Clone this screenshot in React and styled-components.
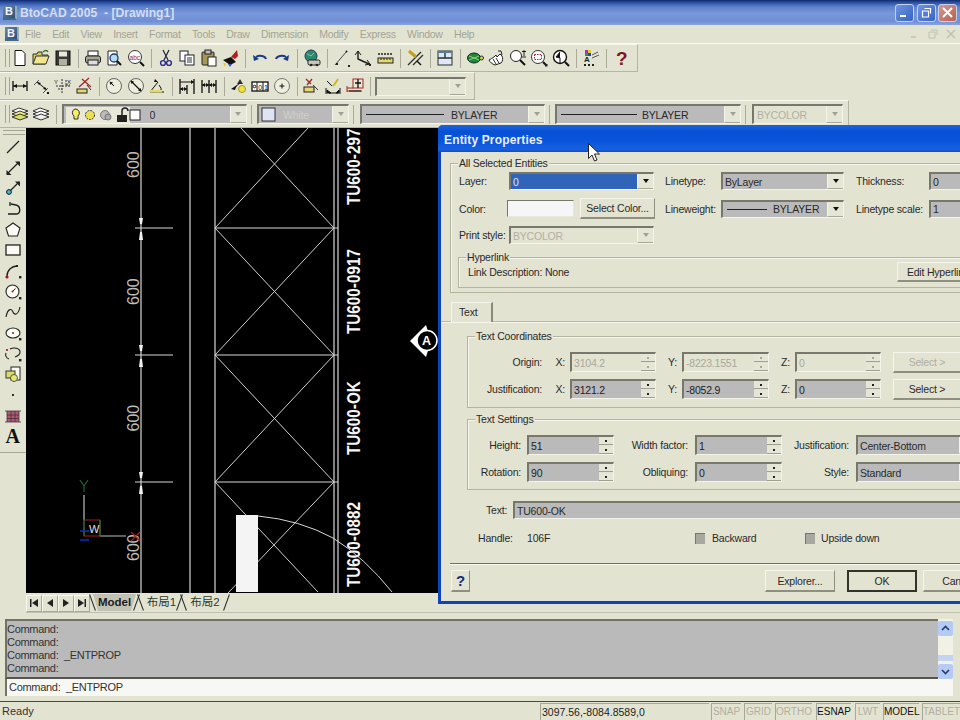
import React from "react";
import styled, { createGlobalStyle, css } from "styled-components";

const Global = createGlobalStyle`
  html, body { margin: 0; padding: 0; background: #e3e3d2; overflow: hidden; }
  #root { width: 960px; height: 720px; }
  * { box-sizing: border-box; }
`;

const CHROME = "#e3e3d2";
const FIELD = "#bababa";
const UI_TEXT = css`font-size: 10.5px; letter-spacing: -0.2px;`;

const Page = styled.div`
  position: relative; width: 960px; height: 720px; overflow: hidden;
  display: flex; flex-direction: column; background: ${CHROME};
  font-family: "Liberation Sans", Arial, sans-serif; font-size: 11px; color: #2a2a2a;
`;
const TitleBar = styled.div`
  height: 25px; display: flex; align-items: center; padding: 0 3px 0 3px; flex: none;
  background: linear-gradient(180deg, #10296a 0, #2b4fa3 10%, #5f82cc 28%, #7a98da 55%, #6f8ed6 85%, #8aa4df 100%);
`;
const AppLogo = styled.div`
  width: ${p => p.$s}px; height: ${p => p.$s}px; flex: none; display: flex; align-items: center; justify-content: center;
  background: linear-gradient(135deg, #6b85a8, #2f4f78); color: #f2f5fa; font-weight: 700; font-size: ${p => p.$s - 3}px;
  line-height: 1; border-right: 2px solid #8fb0b8; border-bottom: 2px solid #3f6a80;
`;
const TitleText = styled.div`
  margin-left: 3px; font-size: 12.2px; font-weight: 700; color: #d3def3; white-space: pre;
`;
const WinButtons = styled.div`margin-left: auto; display: flex; gap: 2.5px; margin-right: 0;`;
const WinButton = styled.div`
  width: 19px; height: 18px; border-radius: 3px; border: 1px solid #c4d2ee;
  display: flex; align-items: center; justify-content: center;
  background: ${p => p.$close ? "linear-gradient(135deg,#d39a8e,#b8604e)" : "linear-gradient(135deg,#6f96e0,#3663c4)"};
  svg { display: block; }
`;
const MenuBar = styled.div`
  height: 19px; display: flex; align-items: center; flex: none; padding-left: 5px;
  border-bottom: 1px solid #fbfbf4; position: relative;
`;
const MenuItems = styled.div`display: flex; gap: 11.4px; margin-left: 6px; color: #a3a395; font-size: 10.5px; letter-spacing: -0.3px;`;
const MdiButtons = styled.div`
  margin-left: auto; margin-right: 3px; display: flex; gap: 6px; color: #c2c2b4;
  svg { display: block; }
`;
const Dock = styled.div`display: flex; flex-direction: column; flex: none;`;
const Toolbar = styled.div`
  width: ${p => p.$w}px; height: ${p => p.$h}px; display: flex; align-items: center; padding-left: 9px;
  border-right: 1px solid #b5b5a4; border-bottom: 1px solid #b5b5a4; border-top: 1px solid #f8f8ef; position: relative;
  &::before {
    content: ""; position: absolute; left: 5px; top: 4px; bottom: 4px; width: 3px;
    border-left: 1px solid #a5a594; border-right: 1px solid #a5a594;
  }
`;
const ToolBtn = styled.div`
  width: 21.5px; height: 21px; flex: none; display: flex; align-items: center; justify-content: center;
  svg { display: block; }
`;
const Sep = styled.div`
  width: 8.5px; height: 21px; flex: none; position: relative;
  &::after { content: ""; position: absolute; left: 4px; top: 1px; bottom: 1px; width: 1px; background: #aaa99a; }
`;
const Field = styled.div`
  width: ${p => p.$w ? p.$w + "px" : "auto"}; height: ${p => p.$h || 20}px; flex: ${p => p.$w ? "none" : 1};
  margin-left: ${p => p.$ml || 0}px;
  display: flex; align-items: center; overflow: hidden; white-space: nowrap;
  background: ${p => p.$bg || FIELD}; color: ${p => p.$c || "#2a2a2a"};
  border-top: 2px solid #77776c; border-left: 2px solid #77776c;
  border-right: 1px solid #f4f4ea; border-bottom: 1px solid #f4f4ea;
  ${UI_TEXT} padding-left: 2px;
`;
const FieldText = styled.span`flex: 1; min-width: 0; overflow: hidden; padding-left: ${p => p.$pl || 0}px;`;
const DropBtn = styled.div`
  width: 16px; align-self: stretch; flex: none; background: #e6e6d6; border-left: 1px solid #f4f4ec; border-bottom: 1px solid #a8a898;
  display: flex; align-items: center; justify-content: center;
  &::after {
    content: ""; width: 0; height: 0; border-left: 3.5px solid transparent; border-right: 3.5px solid transparent;
    border-top: 4px solid ${p => p.$off ? "#a0a094" : "#111"};
  }
`;
const LineSample = styled.span`
  width: ${p => p.$w}px; height: 1px; background: #222; flex: none; margin: 0 ${p => p.$gap}px 0 2px;
`;
const Canvasish = styled.div`display: flex; flex: 1; min-height: 0;`;
const LeftBar = styled.div`
  width: 26px; flex: none; height: 325px; display: flex; flex-direction: column; align-items: center; padding-top: 8.5px;
  border-bottom: 1px solid #a8a898; position: relative;
  &::before {
    content: ""; position: absolute; top: 2px; left: 3px; right: 1px; height: 3px;
    border-top: 1px solid #a5a594; border-bottom: 1px solid #a5a594;
  }
`;
const LeftBtn = styled.div`
  height: 20.7px; width: 22px; flex: none; display: flex; align-items: center; justify-content: center;
  svg { display: block; }
`;
const Work = styled.div`flex: 1; display: flex; flex-direction: column; min-width: 0;`;
const Drawing = styled.svg`
  display: block; width: 934px; height: 465px; flex: none; background: #000;
`;
const LayoutBar = styled.div`
  height: 19px; margin-top: 1px; display: flex; align-items: center; flex: none; border-bottom: 1px solid #c0c0b0;
`;
const NavBtn = styled.div`
  width: 16px; height: 17px; flex: none; display: flex; align-items: center; justify-content: center;
  border-right: 1px solid #a8a898; border-bottom: 1px solid #a8a898; border-top: 1px solid #f8f8ef; border-left: 1px solid #f8f8ef;
  svg { display: block; }
`;
const LayoutTab = styled.div`
  position: relative; width: ${p => p.$w}px; height: 17px; margin-top: -1px; flex: none; text-align: center; line-height: 17px;
  font-size: 11.5px; font-family: "Liberation Sans", "Noto Sans CJK SC", sans-serif;
  color: ${p => p.$on ? "#1c1c1c" : "#2c3a2c"}; font-weight: ${p => p.$on ? 700 : 400};
  ${p => p.$on && css`
    background: #c2c2b4; clip-path: polygon(0 0, 100% 0, calc(100% - 5px) 100%, 5px 100%);
  `}
`;
const Slant = styled.div`
  width: 1px; height: 17px; flex: none; background: #2a2a2a; margin-top: -1px; margin-left: ${p => p.$ml || 0}px;
  transform: rotate(${p => p.$r}deg);
`;
const CommandArea = styled.div`
  flex: none; height: 80px; margin: 8px 7px 0 5px; display: flex; flex-direction: column;
`;
const CommandTop = styled.div`display: flex; height: 60px; flex: none;`;
const History = styled.div`
  flex: 1; background: #bababa; border-top: 2px solid #73736a; border-left: 2px solid #73736a; border-bottom: 2px solid #55554d;
  padding-top: 2px; font-size: 11px; letter-spacing: -0.3px; line-height: 13px; color: #333;
  div { white-space: pre; }
`;
const Scroll = styled.div`
  width: 15px; flex: none; background: #f1f1e6; display: flex; flex-direction: column; justify-content: space-between;
  padding-top: 2px; position: relative;
`;
const ScrollBtn = styled.div`
  height: 15px; background: #b4cbf3; border-radius: 2px; display: flex; align-items: center; justify-content: center;
  svg { display: block; }
`;
const ScrollThumb = styled.div`
  position: absolute; left: 0; right: 0; bottom: 18px; height: 6px; background: #c4d4f0;
`;
const CommandInput = styled.div`
  height: 17px; background: #f7f7f4; font-size: 11px; letter-spacing: -0.3px; line-height: 17px; white-space: pre; padding-left: 2px;
  border-left: 2px solid #73736a; color: #333;
`;
const StatusBar = styled.div`
  flex: none; height: 19px; margin-top: 2px; border-top: 1px solid #4a4a42; display: flex; align-items: center;
  font-size: 11px; position: relative;
`;
const StatusReady = styled.div`padding-left: 2px; width: 541px; color: #333;`;
const Coord = styled.div`
  width: 169px; height: 17px; line-height: 16px; border-left: 1px solid #a8a898; border-top: 1px solid #a8a898; padding-left: 1px;
  font-size: 10.5px; color: #222; flex: none;
`;
const StatusBtn = styled.div`
  width: ${p => p.$w}px; margin-left: ${p => p.$ml}px; height: 17px; line-height: 16px; text-align: center; flex: none; font-size: 10px;
  color: ${p => p.$on ? "#111" : "#b0b0a2"};
  border-left: 1px solid #a8a898; border-top: 1px solid #a8a898;
`;

/* Dialog */
const Dialog = styled.div`
  position: absolute; left: 438px; top: 125px; width: 545px; height: 479px;
  border: 3px solid #0f44b8; border-top: 0; border-radius: 5px 0 0 0; background: ${CHROME}; display: flex; flex-direction: column;
`;
const DlgTitle = styled.div`
  height: 27px; flex: none; margin: 0 -3px; padding-left: 6px; display: flex; align-items: center; padding-top: 2px;
  background: linear-gradient(180deg, #1c64de 0, #0650d4 25%, #0a55dc 60%, #1860e0 90%, #0d4cc4 100%);
  color: #e8effc; font-weight: 700; font-size: 12px; letter-spacing: 0.15px; border-radius: 5px 0 0 0;
`;
const Group = styled.div`
  position: relative; border: 1px solid #b4b4a4; flex: none;
  margin: ${p => p.$mt}px ${p => p.$mr || 0}px 0 ${p => p.$ml}px;
  padding: ${p => p.$pt}px 0 ${p => p.$pb}px ${p => p.$pl || 0}px;
  box-shadow: inset 1px 1px 0 #f5f5ec;
`;
const Legend = styled.div`
  position: absolute; top: -7px; left: 7px; background: ${CHROME}; padding: 0 1px; ${UI_TEXT} line-height: 13px; color: #2a2a2a;
`;
const Row = styled.div`
  display: flex; align-items: center; height: ${p => p.$h}px; margin-top: ${p => p.$mt || 0}px; margin-left: ${p => p.$ml || 0}px;
`;
const Lbl = styled.div`
  width: ${p => p.$w}px; margin-left: ${p => p.$ml || 0}px; flex: none; white-space: nowrap; ${UI_TEXT}
  text-align: ${p => p.$right ? "right" : "left"}; padding-right: ${p => p.$pr || 0}px;
  color: ${p => p.$c || "#2a2a2a"};
`;
const Btn = styled.div`
  width: ${p => p.$w}px; height: ${p => p.$h || 21}px; margin-left: ${p => p.$ml || 0}px; flex: none;
  display: flex; align-items: center; justify-content: center; white-space: nowrap; ${UI_TEXT}
  color: ${p => p.$off ? "#aeaea0" : "#2a2a2a"};
  border-right: 1px solid #8f8f80; border-bottom: 2px solid #8f8f80; border-top: 1px solid #f5f5ec; border-left: 1px solid #f5f5ec;
  ${p => p.$default && css`border: 2px solid #33332c; border-right-width: 2px;`}
`;
const Swatch = styled.div`
  width: 67px; height: 17px; flex: none; background: #f6f6f8; border: 1px solid #77776c; border-bottom-color: #e8e8dc; border-right-color: #e8e8dc;
`;
const SpinWrap = styled.div`
  width: 14px; align-self: stretch; flex: none; display: flex; flex-direction: column; gap: 1px; background: ${CHROME};
`;
const SpinPart = styled.div`
  flex: 1; background: #e6e6d6; border-bottom: 1px solid #a0a090; display: flex; align-items: center; justify-content: center;
  &::after {
    content: ""; width: 2px; height: 2px; background: ${p => p.$off ? "#a8a89a" : "#222"};
  }
`;
const TabStrip = styled.div`
  height: 20px; margin-top: 9px; flex: none; border-bottom: 1px solid #b8b8a8; padding-left: 10px; box-shadow: 0 1px 0 #f5f5ec;
`;
const TabHead = styled.div`
  width: 42px; height: 20px; padding: 2px 0 0 7px; border-right: 2px solid #8a8a7a; ${UI_TEXT} line-height: 14px;
  background: ${CHROME}; border-top: 1px solid #f5f5ec; border-left: 1px solid #f5f5ec;
`;
const Check = styled.div`
  width: 10px; height: 11px; flex: none; margin-left: ${p => p.$ml}px; background: #a8a8a0; border-left: 1px solid #77776c; border-top: 1px solid #77776c;
`;
const DlgRule = styled.div`
  height: 2px; margin-top: 16px; margin-left: 9px; background: #6f6f64; border-bottom: 1px solid #fafaf0; flex: none;
`;
const DlgFooter = styled.div`display: flex; align-items: center; height: 22px; margin-top: 5px; padding-left: 10px; flex: none;`;
const HelpText = styled.span`color: #0d2f80; font-weight: 700; font-size: 15px;`;

const S = { fill: "none", stroke: "#1c1c1c", strokeWidth: 1 };

const I = {
  new: <path d="M5 2.5h7l3 3v12H5z" fill="#fff" stroke="#111" />,
  open: <><path d="M2 6h4l1-2h4v3h6l-3 9H2z" fill="#d8c860" stroke="#333"/><path d="M2 16l3-8h13l-3 8z" fill="#f0e58c" stroke="#333"/><path d="M12 4c2-2 4-2 5 0" stroke="#2a7a2a" fill="none" strokeWidth="1.4"/></>,
  save: <><rect x="3" y="3" width="14" height="14" fill="#3a3a34" stroke="#111"/><rect x="6" y="3.5" width="8" height="5" fill="#e8e8dc"/><rect x="6" y="11" width="8" height="6" fill="#b0b0a0"/></>,
  print: <><rect x="5" y="3" width="10" height="5" fill="#fff" stroke="#222"/><rect x="2.5" y="8" width="15" height="7" rx="2" fill="#a8a898" stroke="#222"/><rect x="5" y="12" width="10" height="5" fill="#ddd" stroke="#222"/></>,
  preview: <><path d="M4 3h9v14H4z" fill="#fff" stroke="#222"/><circle cx="10" cy="10" r="4" fill="#b8dcec" stroke="#1a3a7a" strokeWidth="1.3"/><path d="M13 13l4 4" stroke="#111" strokeWidth="2"/></>,
  spell: <><circle cx="9" cy="9" r="6.5" fill="#fff" stroke="#333"/><text x="3.6" y="11.5" fontSize="6.5" fill="#a02020" fontFamily="Liberation Sans">abc</text><path d="M14 14l4 4" stroke="#111" strokeWidth="2"/></>,
  cut: <><path d="M7 2l5 10M13 2L8 12" stroke="#223" strokeWidth="1.2"/><circle cx="7" cy="15" r="2.4" fill="none" stroke="#2a2a90" strokeWidth="1.4"/><circle cx="13" cy="15" r="2.4" fill="none" stroke="#2a2a90" strokeWidth="1.4"/></>,
  copy: <><rect x="3" y="3" width="8" height="10" fill="#fff" stroke="#223"/><rect x="8" y="7" width="9" height="10" fill="#fff" stroke="#223"/><path d="M10 10h5M10 12h5M10 14h5" stroke="#334"/></>,
  paste: <><rect x="3" y="4" width="12" height="13" rx="1" fill="#a89858" stroke="#222"/><rect x="6" y="2" width="6" height="4" fill="#bbb" stroke="#222"/><rect x="9" y="9" width="8" height="9" fill="#fff" stroke="#222"/></>,
  match: <><path d="M3 12l8-3 5 5-6 3z" fill="#111"/><path d="M11 9l6-7 1 6-3 3z" fill="#b02020"/><path d="M3 14l3 2-1 3z" fill="#e8c820"/><path d="M8 16l2 3 2-3z" fill="#2a50c0"/></>,
  undo: <><path d="M6 9a6 4 0 0 1 10 2" {...S} stroke="#1a3a8a" strokeWidth="2"/><path d="M3 7l1 6 5-2z" fill="#1a3a8a"/></>,
  redo: <><path d="M14 9a6 4 0 0 0-10 2" {...S} stroke="#1a3a8a" strokeWidth="2"/><path d="M17 7l-1 6-5-2z" fill="#1a3a8a"/></>,
  tree: <><circle cx="9" cy="8" r="6" fill="#2a8a70" stroke="#1a3a50"/><path d="M5 6l4 2 3-3" stroke="#8cc0a0" fill="none"/><rect x="6" y="12" width="12" height="5" rx="1.5" fill="#c8c8b8" stroke="#222"/><circle cx="9" cy="17" r="1.3" fill="#222"/><circle cx="15" cy="17" r="1.3" fill="#222"/></>,
  snapLine: <><path d="M3 17L15 3" stroke="#444"/><path d="M14 4l1-1" stroke="#222" strokeWidth="2"/><rect x="4" y="15" width="2" height="2" fill="#222"/><rect x="16" y="17" width="2" height="2" fill="#222"/></>,
  ucs: <><path d="M5 3v8l11 5" {...S} strokeWidth="1.4"/><path d="M2 7l3-4 3 4M14 12l3 4-5 1" {...S}/><rect x="16" y="16" width="2" height="2" fill="#222"/></>,
  ruler: <><path d="M3 6h14" stroke="#222" strokeWidth="1.4" strokeDasharray="2 1"/><rect x="3" y="10" width="15" height="5" fill="#e6d870" stroke="#222"/><path d="M6 10v2M9 10v2M12 10v2M15 10v2" stroke="#222"/></>,
  layer: <><path d="M3 17L16 4M8 17L18 7" stroke="#333" strokeWidth="1.4"/><path d="M4 3l7 6" stroke="#c0a020" strokeWidth="3"/><path d="M12 13l4 4" stroke="#111" strokeWidth="1.5"/></>,
  windows: <><rect x="3" y="3" width="14" height="14" fill="#dfe8f4" stroke="#233"/><path d="M3 10h14M10 3v7" stroke="#233" strokeWidth="1.4"/><rect x="3" y="3" width="14" height="2" fill="#5a7a9a"/></>,
  orbit: <><ellipse cx="9" cy="10" rx="6.5" ry="5" fill="#208a30" stroke="#123"/><path d="M4 8l10 4M4 12l10-4" stroke="#8cd08c"/><circle cx="16.5" cy="10" r="2" fill="#e0d040" stroke="#333"/></>,
  pan: <><path d="M3 12c2-1 3-2 5-3l2-2 1 2 3-3 2 2c1 2 1 5-1 7l-6 2c-3-1-5-3-6-5z" fill="#fff" stroke="#222"/><path d="M12 3l3 0 1 4" stroke="#222" fill="none"/><path d="M7 11l3 5M10 10l3 5" stroke="#333"/></>,
  zoomR: <><circle cx="8" cy="8" r="5.5" fill="#fff" stroke="#222"/><path d="M12 12l5 5" stroke="#111" strokeWidth="2"/><path d="M16 2v6M14 3.5h4M14 9h4" stroke="#222"/></>,
  zoomW: <><circle cx="9" cy="9" r="6.5" fill="#fff" stroke="#333"/><rect x="5.5" y="6.5" width="7" height="5" fill="none" stroke="#b02020" strokeDasharray="1.5 1"/><path d="M14 14l3 3" stroke="#111" strokeWidth="2"/><rect x="16" y="16" width="2.5" height="2.5" fill="#222"/></>,
  zoomP: <><circle cx="9" cy="9" r="6.5" fill="#fff" stroke="#111" strokeWidth="1.4"/><path d="M9 4l-4 5 4 1v5" fill="#111" stroke="#111"/><path d="M14 14l4 4" stroke="#111" strokeWidth="2"/></>,
  props: <><rect x="4" y="2" width="3" height="3" fill="#c020c0"/><rect x="7" y="2" width="3" height="3" fill="#e0d020"/><rect x="4" y="5" width="3" height="3" fill="#20a030"/><rect x="7" y="5" width="3" height="3" fill="#2040c0"/><text x="3" y="14" fontSize="8" fontWeight="700" fill="#222" fontFamily="Liberation Sans">A</text><path d="M3 16h2v2H3zM7 16h2v2H7zM11 16h2v2h-2z" fill="#222"/><path d="M11 7l6-3M11 10l7-3" stroke="#555"/></>,
  help: <text x="5" y="17" fontSize="19" fontWeight="700" fill="#801818" fontFamily="Liberation Sans">?</text>,
  dimL: <><path d="M3 5v10M17 5v10" stroke="#111" strokeWidth="1.3"/><path d="M3 10h14" stroke="#111"/><path d="M3 10l4-2v4zM17 10l-4-2v4z" fill="#111"/></>,
  dimA: <><path d="M3 9l5-5M12 17l5-5" stroke="#555"/><path d="M6 6l10 8" stroke="#111"/><path d="M6 6l4 1-2 2zM16 14l-4-1 2-2z" fill="#111"/><rect x="16" y="16" width="2" height="2" fill="#111"/></>,
  dimO: <><path d="M9 3v14M3 10h14M13 4v5M13 9h4M5 13h4" stroke="#333" strokeDasharray="2 1"/><text x="1" y="8" fontSize="6" fill="#222" fontFamily="Liberation Sans">Y</text><text x="14" y="8" fontSize="6" fill="#222" fontFamily="Liberation Sans">X</text></>,
  dimE: <><rect x="3" y="13" width="10" height="4" fill="#e6d870" stroke="#222"/><path d="M5 11l10-9M8 3l9 8" stroke="#a02828" strokeWidth="1.3"/><path d="M13 9l4 5" stroke="#333"/></>,
  dimR: <><circle cx="10" cy="10" r="7.5" fill="#eeeede" stroke="#666"/><path d="M10 10L6 6" stroke="#111"/><path d="M5.5 5.5l1 3.5 2.5-2.5z" fill="#111"/></>,
  dimD: <><circle cx="10" cy="10" r="7.5" fill="#eeeede" stroke="#666"/><path d="M5 5l10 10" stroke="#111" strokeWidth="1.2"/><path d="M4.5 4.5l1 3.5 2.5-2.5zM15.5 15.5l-1-3.5-2.5 2.5z" fill="#111"/></>,
  dimAng: <><path d="M3 16h14M3 16l8-10" stroke="#111"/><path d="M12 9a7 7 0 0 1 2 7" stroke="#111" fill="none"/><rect x="3" y="14" width="12" height="2.5" fill="#e6d870"/><path d="M8 3l3 3-4 0z" fill="#111"/></>,
  dimB: <><path d="M3 3v15M17 3v15M10 9v9" stroke="#111" strokeWidth="1.3"/><path d="M3 6h14M3 13h7" stroke="#111"/><path d="M17 6l-3-2v4zM3 13l3-2v4zM10 13l-3-2v4z" fill="#111"/></>,
  dimC: <><path d="M3 4v13M10 4v13M17 4v13" stroke="#111" strokeWidth="1.3"/><path d="M3 9h14" stroke="#111"/><path d="M3 9l3-2v4zM10 9l-3-2v4zM10 9l3-2v4zM17 9l-3-2v4z" fill="#111"/></>,
  leader: <><path d="M2 13l6-4-2 5z" fill="#111"/><path d="M11 3l3 5h-6z" fill="#333"/><circle cx="13" cy="13" r="3.5" fill="#f0e040" stroke="#aa9a20"/><path d="M5 12l6-5" stroke="#111"/></>,
  tol: <><rect x="2" y="6" width="16" height="9" fill="#fff" stroke="#111" strokeWidth="1.3"/><path d="M7 6v9M13 6v9" stroke="#111"/><circle cx="4.5" cy="10.5" r="1.3" {...S}/><text x="8.3" y="13.5" fontSize="7" fill="#111" fontFamily="Liberation Sans">0</text><text x="14" y="13.5" fontSize="7" fill="#111" fontFamily="Liberation Sans">1</text></>,
  center: <><circle cx="10" cy="10" r="7.5" fill="#eeeede" stroke="#777"/><path d="M10 7.5v5M7.5 10h5" stroke="#111"/></>,
  dimEd: <><path d="M4 3l5 5M10 3L5 9" stroke="#a02828" strokeWidth="1.3"/><rect x="2" y="11" width="10" height="5" fill="#e6d870" stroke="#222"/><path d="M11 9l5 5" stroke="#333"/></>,
  dimT: <><path d="M4 5l5 5M6 17h9" stroke="#111"/><path d="M4 14l4 3-4 0zM16 14l-3 3h3zM3 12v6M17 12v6" stroke="#111" fill="#111"/><path d="M10 10c2-2 3-4 5-7" stroke="#d0b820" strokeWidth="2" fill="none"/></>,
  dimU: <><rect x="8" y="3" width="10" height="9" fill="#e8e8d8" stroke="#a02828"/><path d="M13 3v9M10 7h6" stroke="#111" strokeWidth="1.3"/><path d="M2 12h6M2 10v6M2 15h15" stroke="#a02828"/><path d="M4 15h12" stroke="#111"/></>,
  layers1: <><path d="M2 7l7-3 9 3-8 3z" fill="#fff" stroke="#333"/><path d="M2 10l8 3 8-3-8-3z" fill="#f0ec80" stroke="#333"/><path d="M2 13l8 3 8-3-8-3z" fill="#d8e060" stroke="#333"/></>,
  layers2: <><path d="M2 7l7-3 9 3-8 3z" fill="#fff" stroke="#333"/><path d="M2 10l8 3 8-3-8-3z" fill="#fff" stroke="#333"/><path d="M2 13l8 3 8-3-8-3z" fill="#eee" stroke="#333"/></>,
  lLine: <path d="M4 16L16 4" stroke="#222" strokeWidth="1.2"/>,
  lXline: <><path d="M4 16L16 4" stroke="#222" strokeWidth="1.2"/><path d="M12 3.5h5v5zM3.5 12v5h5z" fill="#222"/></>,
  lRay: <><path d="M7 13l9-9" stroke="#222" strokeWidth="1.2"/><path d="M12 3.5h5v5z" fill="#222"/><circle cx="6" cy="14" r="2.4" fill="#40c0b0" stroke="#114"/></>,
  lPoly: <path d="M5 15h8c5 0 5-8 0-9l-5-1M7 3v4" {...S} strokeWidth="1.3"/>,
  lGon: <path d="M10 3l7 5-2.5 8h-9L3 8z" fill="#fbfbf4" stroke="#222" strokeWidth="1.1"/>,
  lRect: <rect x="3" y="5" width="14" height="10" fill="#fbfbf4" stroke="#222" strokeWidth="1.3"/>,
  lArc: <><path d="M4 15c0-6 5-10 10-10" {...S} strokeWidth="1.3"/><circle cx="4" cy="16" r="1.6" fill="#a01818"/><rect x="13" y="4" width="2" height="2" fill="#222"/><rect x="16" y="15" width="2.4" height="2.4" fill="#222"/></>,
  lCirc: <><circle cx="9.5" cy="9.5" r="6.5" fill="#fbfbf4" stroke="#222" strokeWidth="1.1"/><path d="M9.5 9.5l3-3" stroke="#222"/><circle cx="9.5" cy="9.5" r="1" fill="#a01818"/><rect x="16" y="15" width="2.4" height="2.4" fill="#222"/></>,
  lSpl: <path d="M3 15C5 5 9 7 10 10s5 4 7-5" {...S} strokeWidth="1.1"/>,
  lEll: <><ellipse cx="10" cy="10" rx="7" ry="5" fill="#fbfbf4" stroke="#222" strokeWidth="1.1"/><circle cx="10" cy="10" r="1" fill="#a01818"/><rect x="16" y="15" width="2.4" height="2.4" fill="#222"/></>,
  lEArc: <><path d="M6 15c-3-1-4-4-3-6M7 5c4-2 10-1 10 3 0 2-2 4-5 5" {...S} strokeWidth="1.1"/><circle cx="4" cy="6" r="1.1" fill="#a01818"/><rect x="16" y="15" width="2.4" height="2.4" fill="#222"/></>,
  lIns: <><rect x="8" y="3" width="9" height="13" fill="#fbfbf4" stroke="#222"/><rect x="3" y="7" width="9" height="7" fill="#d8dc60" stroke="#333"/><circle cx="11" cy="14" r="3.5" fill="#e8e870" stroke="#555"/></>,
  lPt: <rect x="9" y="9" width="2" height="2" fill="#333"/>,
  lHatch: <><rect x="4" y="5" width="12" height="11" fill="#b05a70"/><path d="M4 5v11M16 5v11M2 5h16M2 16h16M4 9h12M4 12.5h12M8 5v11M12 5v11" stroke="#4a3040" strokeWidth="0.8"/></>,
  lText: <text x="2.5" y="17" fontSize="20" fontWeight="700" fill="#111" fontFamily="Liberation Serif">A</text>,
};

const Ic = ({ n, s = 20 }) => <svg width={s} height={s} viewBox="0 0 20 20">{I[n]}</svg>;

const row1 = "new open save | print preview spell | cut copy paste match | undo redo | tree | snapLine ucs ruler | layer | windows | orbit pan zoomR zoomW zoomP | props | help".split(" ");
const row2 = "dimL dimA dimO dimE | dimR dimD dimAng | dimB dimC | leader tol center | dimEd dimT dimU |".split(" ");
const left = "lLine lXline lRay lPoly lGon lRect lArc lCirc lSpl lEll lEArc lIns lPt lHatch lText".split(" ");
const menus = ["File", "Edit", "View", "Insert", "Format", "Tools", "Draw", "Dimension", "Modify", "Express", "Window", "Help"];

const Tools = ({ items }) => items.map((n, i) =>
  n === "|" ? <Sep key={i} /> : <ToolBtn key={i}><Ic n={n} /></ToolBtn>);

const Combo = ({ w, h, ml, children, arrowOff, bg, c }) => (
  <Field $w={w} $h={h} $ml={ml} $bg={bg} $c={c}>
    {children}
    <DropBtn $off={arrowOff} />
  </Field>
);

const Spin = ({ w, ml, off, value }) => (
  <Field $w={w} $h={20} $ml={ml} $bg={off ? CHROME : FIELD} $c={off ? "#a8a89a" : "#222"}>
    <FieldText>{value}</FieldText>
    <SpinWrap><SpinPart $off={off} /><SpinPart $off={off} /></SpinWrap>
  </Field>
);

const W = "#d8d8d8";
const horizontals = [228, 355, 482];
const crosses = [165, 292, 418.5, 548];
const Arrow = ({ y }) => (
  <>
    <path d={`M139 ${y - 10}h4l-1 6h-2z`} fill="#f0f0f0" />
    <path d={`M140 ${y + 4}h2l1 8h-4z`} fill="#f0f0f0" />
  </>
);
const LabelV = ({ x, y, children }) => (
  <text transform={`translate(${x},${y}) rotate(-90) scale(1,1.2)`} fontFamily="Liberation Sans" fontWeight="700" fontSize="15.3" fill="#f4f4f4">{children}</text>
);

const Plan = () => {
  const dx = 26, dy = 128; // page position of the canvas
  return (
    <Drawing viewBox="0 0 934 465">
      <g transform={`translate(${-dx},${-dy})`}>
        <g stroke={W} strokeWidth="1.2">
          {[141, 190, 215, 334, 338].map(x => <line key={x} x1={x} x2={x} y1="128" y2="593" />)}
          {horizontals.map(y => <g key={y}><line x1="135" x2="173" y1={y} y2={y} /><line x1="215" x2="338" y1={y} y2={y} /></g>)}
          <path d="M241 128L334 228M308 128L215 228M215 228L334 355M334 228L215 355M215 355L334 482M334 355L215 482M215 482L318 592M334 482L228 593" fill="none" strokeWidth="1" stroke="#cfcfcf" />
        </g>
        {horizontals.map(y => <Arrow key={y} y={y} />)}
        <rect x="236" y="515" width="22" height="77" fill="#f4f4f4" />
        {crosses.map(y => (
          <text key={y} transform={`translate(139,${y + 13}) rotate(-90)`} fontFamily="Liberation Sans" fontSize="16" fill="#bdbdbd">600</text>
        ))}
        <LabelV x={360} y={205}>TU600-2975</LabelV>
        <LabelV x={360} y={334}>TU600-0917</LabelV>
        <LabelV x={360} y={455}>TU600-OK</LabelV>
        <LabelV x={360} y={587}>TU600-0882</LabelV>
        <path d="M258 516Q300 520 333 538Q365 558 392 592" fill="none" stroke="#d8d8d8" strokeWidth="1" />
        <g fill="none">
          <path d="M84 495v25M100 536h26" stroke="#bbb" strokeWidth="1.2" />
          <rect x="84" y="520" width="16" height="16" stroke="#a02020" />
          <path d="M100 520v16" stroke="#1c8a30" />
          <path d="M84 520v16" stroke="#1c8a30" />
          <path d="M80 531h9M80 540h9" stroke="#1030c0" strokeWidth="1.5" />
          <path d="M80 480l4 6 4-6M84 486v6" stroke="#1a6a30" strokeWidth="1.2" />
          <path d="M131 532l9 9M140 532l-9 9" stroke="#b02020" strokeWidth="1.2" />
        </g>
        <text x="89" y="533" fontFamily="Liberation Sans" fontSize="11" fill="#e0e0e0">W</text>
        <path d="M410 341L426 325L431 341L426 357Z" fill="#fff" />
        <circle cx="427" cy="340.500" r="10" fill="#000" stroke="#fff" strokeWidth="1.5" />
        <text x="422" y="345" fontFamily="Liberation Sans" fontWeight="700" fontSize="12.500" fill="#fff">A</text>
      </g>
    </Drawing>
  );
};

const Nav = ({ d }) => <NavBtn><svg width="10" height="10" viewBox="0 0 10 10"><path d={d} fill="#222" /></svg></NavBtn>;

export default function App() {
  return (
    <Page>
      <Global />
      <TitleBar>
        <AppLogo $s={14}>B</AppLogo>
        <TitleText>BtoCAD 2005  - [Drawing1]</TitleText>
        <WinButtons>
          <WinButton><svg width="11" height="11" viewBox="0 0 11 11"><rect x="1" y="8" width="6" height="2" fill="#fff" /></svg></WinButton>
          <WinButton><svg width="11" height="11" viewBox="0 0 11 11"><path d="M3.500 1.500h6v5M1.500 4h6v6h-6z" fill="none" stroke="#fff" strokeWidth="1.200" /></svg></WinButton>
          <WinButton $close><svg width="13" height="13" viewBox="0 0 13 13"><path d="M2 2l9 9M11 2l-9 9" stroke="#fff" strokeWidth="2" /></svg></WinButton>
        </WinButtons>
      </TitleBar>
      <MenuBar>
        <AppLogo $s={14}>B</AppLogo>
        <MenuItems>{menus.map(m => <span key={m}>{m}</span>)}</MenuItems>
        <MdiButtons>
          <svg width="12" height="12" viewBox="0 0 12 12"><path d="M2 9h5" stroke="#c2c2b4" strokeWidth="1.500" /></svg>
          <svg width="12" height="12" viewBox="0 0 12 12"><path d="M4 2h6v5M2 4h6v6H2z" fill="none" stroke="#c2c2b4" /></svg>
          <svg width="12" height="12" viewBox="0 0 12 12"><path d="M2 2l8 8M10 2l-8 8" stroke="#c2c2b4" strokeWidth="1.500" /></svg>
        </MdiButtons>
      </MenuBar>
      <Dock>
        <Toolbar $w={638} $h={28}><Tools items={row1} /></Toolbar>
        <Toolbar $w={475} $h={28}>
          <Tools items={row2} />
          <Combo w={91} h={19} ml={1} bg={CHROME} arrowOff><FieldText /></Combo>
        </Toolbar>
        <Toolbar $w={849} $h={28}>
          <ToolBtn><Ic n="layers1" /></ToolBtn>
          <ToolBtn><Ic n="layers2" /></ToolBtn>
          <Sep />
          <Combo w={185} h={20} ml={1} arrowOff>
            <svg width="84" height="16" viewBox="0 0 84 16" style={{ flex: "none" }}>
              <rect x="0" y="0" width="64" height="16" fill="#e8e8d8" />
              <path d="M9 2a4 4 0 0 1 3 7v3h-4v-3a4 4 0 0 1 1-7z" fill="#f4f060" stroke="#333" />
              <circle cx="24" cy="8" r="4.500" fill="#e8e050" stroke="#333" strokeDasharray="2 1" />
              <circle cx="39" cy="8" r="4.500" fill="#bbb" stroke="#777" /><circle cx="42" cy="10" r="3" fill="#aaa" stroke="#777" />
              <path d="M51 8h10v7H51z" fill="#222" /><path d="M56 8V4a3 3 0 0 1 6 0" fill="none" stroke="#222" strokeWidth="1.500" />
              <rect x="64" y="3" width="10" height="10" fill="#fff" stroke="#222" />
            </svg>
            <FieldText $pl={-1}>0</FieldText>
          </Combo>
          <Sep />
          <Combo w={92} h={20} ml={2} c="#d0d0c8" arrowOff>
            <svg width="16" height="15" viewBox="0 0 16 15" style={{ flex: "none" }}><rect x="1" y="1" width="13" height="13" fill="#dee4f4" stroke="#333" /></svg>
            <FieldText $pl={6}>White</FieldText>
          </Combo>
          <Sep />
          <Combo w={185} h={20} ml={2.5} arrowOff>
            <LineSample $w={78} $gap={7} /><FieldText>BYLAYER</FieldText>
          </Combo>
          <Sep />
          <Combo w={186} h={20} ml={1.5} arrowOff>
            <LineSample $w={76} $gap={5} /><FieldText>BYLAYER</FieldText>
          </Combo>
          <Sep />
          <Combo w={91} h={20} ml={2.5} bg={CHROME} c="#b0b0a4" arrowOff><FieldText $pl={1}>BYCOLOR</FieldText></Combo>
        </Toolbar>
      </Dock>
      <Canvasish>
        <LeftBar>
          {left.map(n => <LeftBtn key={n}><Ic n={n} s={20} /></LeftBtn>)}
        </LeftBar>
        <Work>
          <Plan />
          <LayoutBar>
            <Nav d="M1 1h1.500v8H1zM9 1v8L3 5z" />
            <Nav d="M8 1v8L2 5z" />
            <Nav d="M2 1v8l6-4z" />
            <Nav d="M1 1v8l6-4zM7.500 1H9v8H7.500z" />
            <Slant $r={-20} $ml={2} />
            <LayoutTab $on $w={43}>Model</LayoutTab>
            <Slant $r={20} />
            <Slant $r={-20} $ml={3} />
            <LayoutTab $w={41}>布局1</LayoutTab>
            <Slant $r={20} $ml={-3} />
            <Slant $r={-20} $ml={3} />
            <LayoutTab $w={42}>布局2</LayoutTab>
            <Slant $r={20} />
          </LayoutBar>
        </Work>
      </Canvasish>
      <CommandArea>
        <CommandTop>
          <History>
            <div>Command:</div>
            <div>Command:</div>
            <div>Command:  _ENTPROP</div>
            <div>Command:</div>
          </History>
          <Scroll>
            <ScrollBtn><svg width="9" height="7" viewBox="0 0 9 7"><path d="M1 5l3.500-3.500L8 5" fill="none" stroke="#2a3a70" strokeWidth="1.600" /></svg></ScrollBtn>
            <ScrollThumb />
            <ScrollBtn><svg width="9" height="7" viewBox="0 0 9 7"><path d="M1 2l3.500 3.500L8 2" fill="none" stroke="#2a3a70" strokeWidth="1.600" /></svg></ScrollBtn>
          </Scroll>
        </CommandTop>
        <CommandInput>Command:  _ENTPROP</CommandInput>
      </CommandArea>
      <StatusBar>
        <StatusReady>Ready</StatusReady>
        <Coord>3097.56,-8084.8589,0</Coord>
        <StatusBtn $w={30} $ml={2}>SNAP</StatusBtn>
        <StatusBtn $w={28} $ml={3}>GRID</StatusBtn>
        <StatusBtn $w={37} $ml={3}>ORTHO</StatusBtn>
        <StatusBtn $w={35} $ml={4} $on>ESNAP</StatusBtn>
        <StatusBtn $w={25} $ml={4}>LWT</StatusBtn>
        <StatusBtn $w={36} $ml={3} $on>MODEL</StatusBtn>
        <StatusBtn $w={38} $ml={3}>TABLET</StatusBtn>
      </StatusBar>

      <Dialog>
        <DlgTitle>Entity Properties</DlgTitle>
        <Group $mt={11} $ml={9} $mr={-40} $pt={8} $pb={4} $pl={8}>
          <Legend>All Selected Entities</Legend>
          <Row $h={18}>
            <Lbl $w={50}>Layer:</Lbl>
            <Combo w={145} h={18} bg="#2f64b8" c="#dfe7f5"><FieldText>0</FieldText></Combo>
            <Lbl $w={56} $ml={11}>Linetype:</Lbl>
            <Combo w={123} h={18}><FieldText>ByLayer</FieldText></Combo>
            <Lbl $w={73} $ml={12}>Thickness:</Lbl>
            <Field $w={100} $h={18}>0</Field>
          </Row>
          <Row $h={21} $mt={8}>
            <Lbl $w={48}>Color:</Lbl>
            <Swatch />
            <Btn $w={75} $ml={6}>Select Color...</Btn>
            <Lbl $w={56} $ml={10}>Lineweight:</Lbl>
            <Combo w={123} h={18}><LineSample $w={40} $gap={6} /><FieldText>BYLAYER</FieldText></Combo>
            <Lbl $w={73} $ml={12}>Linetype scale:</Lbl>
            <Field $w={100} $h={18}>1</Field>
          </Row>
          <Row $h={18} $mt={7}>
            <Lbl $w={50}>Print style:</Lbl>
            <Combo w={145} h={18} bg={CHROME} c="#b0b0a4" arrowOff><FieldText>BYCOLOR</FieldText></Combo>
          </Row>
          <Group $mt={13} $ml={-1} $pt={4} $pb={5} $pl={9}>
            <Legend>Hyperlink</Legend>
            <Row $h={20}>
              <Lbl $w={429}>Link Description: None</Lbl>
              <Btn $w={90} $h={20}>Edit Hyperlink...</Btn>
            </Row>
          </Group>
        </Group>
        <TabStrip><TabHead>Text</TabHead></TabStrip>
        <Group $mt={14} $ml={26} $mr={-40} $pt={15} $pb={8}>
          <Legend>Text Coordinates</Legend>
          <Row $h={20}>
            <Lbl $w={74} $right>Origin:</Lbl>
            <Lbl $w={28} $right $pr={5}>X:</Lbl><Spin w={86} off value="3104.2" />
            <Lbl $w={26} $right $pr={5}>Y:</Lbl><Spin w={87} off value="-8223.1551" />
            <Lbl $w={26} $right $pr={5}>Z:</Lbl><Spin w={86} off value="0" />
            <Btn $w={68} $ml={12} $off>Select &gt;</Btn>
          </Row>
          <Row $h={20} $mt={7}>
            <Lbl $w={74} $right>Justification:</Lbl>
            <Lbl $w={28} $right $pr={5}>X:</Lbl><Spin w={86} value="3121.2" />
            <Lbl $w={26} $right $pr={5}>Y:</Lbl><Spin w={87} value="-8052.9" />
            <Lbl $w={26} $right $pr={5}>Z:</Lbl><Spin w={86} value="0" />
            <Btn $w={68} $ml={12}>Select &gt;</Btn>
          </Row>
        </Group>
        <Group $mt={11} $ml={26} $mr={-40} $pt={15} $pb={7}>
          <Legend>Text Settings</Legend>
          <Row $h={20}>
            <Lbl $w={53} $right>Height:</Lbl>
            <Spin w={87} ml={6} value="51" />
            <Lbl $w={81} $right $pr={7}>Width factor:</Lbl>
            <Spin w={87} value="1" />
            <Lbl $w={74} $right $pr={7}>Justification:</Lbl>
            <Combo w={120} h={20}><FieldText>Center-Bottom</FieldText></Combo>
          </Row>
          <Row $h={20} $mt={7}>
            <Lbl $w={53} $right>Rotation:</Lbl>
            <Spin w={87} ml={6} value="90" />
            <Lbl $w={81} $right $pr={7}>Obliquing:</Lbl>
            <Spin w={87} value="0" />
            <Lbl $w={74} $right $pr={7}>Style:</Lbl>
            <Combo w={120} h={20}><FieldText>Standard</FieldText></Combo>
          </Row>
        </Group>
        <Row $h={18} $mt={11} $ml={45}>
          <Lbl $w={27}>Text:</Lbl>
          <Field $h={18}>TU600-OK</Field>
        </Row>
        <Row $h={18} $mt={10} $ml={37}>
          <Lbl $w={49}>Handle:</Lbl>
          <Lbl $w={168}>106F</Lbl>
          <Check $ml={0} />
          <Lbl $w={93} $ml={7}>Backward</Lbl>
          <Check $ml={0} />
          <Lbl $w={80} $ml={6}>Upside down</Lbl>
        </Row>
        <DlgRule />
        <DlgFooter>
          <Btn $w={19} $h={22}><HelpText>?</HelpText></Btn>
          <Btn $w={70} $h={22} $ml={295}>Explorer...</Btn>
          <Btn $w={70} $h={22} $ml={12} $default>OK</Btn>
          <Btn $w={70} $h={22} $ml={6}>Cancel</Btn>
        </DlgFooter>
      </Dialog>
      <Cursor />
    </Page>
  );
}

const CursorWrap = styled.svg`position: absolute; left: 588px; top: 143px; display: block;`;
function Cursor() {
  return (
    <CursorWrap width="12" height="20" viewBox="0 0 12 20">
      <path d="M0.500 0.500v15l3.500-3.500 2.500 6 2.500-1-2.500-6h5z" fill="#fff" stroke="#222" strokeWidth="1" />
    </CursorWrap>
  );
}
